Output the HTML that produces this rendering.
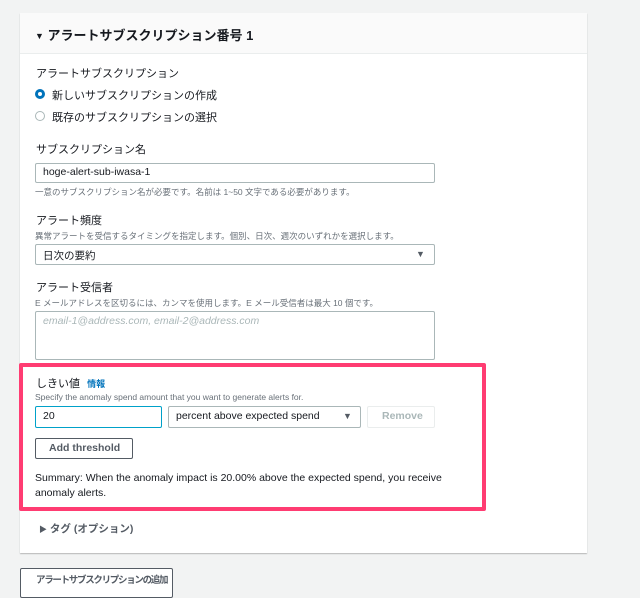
<!DOCTYPE html>
<html><head><meta charset="utf-8"><style>
*{box-sizing:border-box;margin:0;padding:0}
body{width:640px;height:588px;background:#f2f3f3;font-family:"Liberation Sans","Noto Sans CJK JP",sans-serif;color:#16191f;position:relative;overflow:hidden}
.a{position:absolute;white-space:nowrap}
.card{position:absolute;left:20px;top:13px;width:567px;height:540px;background:#fff;box-shadow:0 1px 1px rgba(0,0,0,.25)}
.hdr{position:absolute;left:20px;top:13px;width:567px;height:41px;background:#fafafa;border-bottom:1px solid #eaeded}
.lbl{font-size:11px;color:#16191f}
.hint{font-size:8.5px;color:#687078}
.box{position:absolute;border:1px solid #aab7b8;border-radius:2px;background:#fff}
.tri{font-size:9px;color:#545b64}
</style></head><body>
<div class="card"></div>
<div class="hdr"></div>
<div class="a" style="left:35px;top:25px;font-size:13px;font-weight:bold"><span style="font-size:9px;position:relative;top:-1px">▼</span> アラートサブスクリプション番号 1</div>
<div class="a lbl" style="left:36px;top:65px">アラートサブスクリプション</div>
<div class="a" style="left:35px;top:89px;width:10px;height:10px;border-radius:50%;border:3px solid #0073bb"></div>
<div class="a lbl" style="left:52px;top:87px">新しいサブスクリプションの作成</div>
<div class="a" style="left:35px;top:111px;width:10px;height:10px;border-radius:50%;border:1px solid #aab7b8"></div>
<div class="a lbl" style="left:52px;top:109px">既存のサブスクリプションの選択</div>
<div class="a lbl" style="left:36px;top:141px">サブスクリプション名</div>
<div class="box" style="left:35px;top:163px;width:400px;height:20px"></div>
<div class="a" style="left:43px;top:166px;font-size:10.5px">hoge-alert-sub-iwasa-1</div>
<div class="a hint" style="left:35px;top:186px">一意のサブスクリプション名が必要です。名前は 1~50 文字である必要があります。</div>
<div class="a lbl" style="left:36px;top:212px">アラート頻度</div>
<div class="a hint" style="left:35px;top:230px">異常アラートを受信するタイミングを指定します。個別、日次、週次のいずれかを選択します。</div>
<div class="box" style="left:35px;top:244px;width:400px;height:21px"></div>
<div class="a" style="left:43px;top:248px;font-size:10.5px">日次の要約</div>
<div class="a tri" style="left:416px;top:249px">▼</div>
<div class="a lbl" style="left:36px;top:279px">アラート受信者</div>
<div class="a hint" style="left:35px;top:297px">E メールアドレスを区切るには、カンマを使用します。E メール受信者は最大 10 個です。</div>
<div class="box" style="left:35px;top:311px;width:400px;height:49px"></div>
<div class="a" style="left:43px;top:315px;font-size:10.5px;font-style:italic;color:#aab7b8">email-1@address.com, email-2@address.com</div>
<div class="a" style="left:19px;top:363px;width:467px;height:148px;border:4px solid #ff3c72;border-radius:2px"></div>
<div class="a lbl" style="left:36px;top:375px">しきい値 <span style="color:#0073bb;font-size:9px;font-weight:bold;margin-left:4px">情報</span></div>
<div class="a hint" style="left:35px;top:392px">Specify the anomaly spend amount that you want to generate alerts for.</div>
<div class="box" style="left:35px;top:406px;width:127px;height:22px;border-color:#00a1c9"></div>
<div class="a" style="left:43px;top:410px;font-size:10.5px">20</div>
<div class="box" style="left:168px;top:406px;width:193px;height:22px"></div>
<div class="a" style="left:176px;top:410px;font-size:10.5px">percent above expected spend</div>
<div class="a tri" style="left:343px;top:411px">▼</div>
<div class="box" style="left:367px;top:406px;width:68px;height:22px;border-color:#eaeded"></div>
<div class="a" style="left:382px;top:410px;font-size:10.5px;font-weight:bold;color:#aab7b8">Remove</div>
<div class="box" style="left:35px;top:438px;width:98px;height:21px;border-color:#545b64"></div>
<div class="a" style="left:49px;top:442px;font-size:10.5px;font-weight:bold;color:#545b64">Add threshold</div>
<div class="a" style="left:35px;top:471px;font-size:10.5px;line-height:15px">Summary: When the anomaly impact is 20.00% above the expected spend, you receive<br>anomaly alerts.</div>
<div class="a" style="left:39px;top:521px;font-size:10.5px;font-weight:bold;color:#545b64"><span style="font-size:8px">▶</span> タグ (オプション)</div>
<div class="box" style="left:20px;top:568px;width:153px;height:30px;border-color:#545b64"></div>
<div class="a" style="left:36px;top:572px;font-size:9.5px;letter-spacing:-1.3px;font-weight:bold;color:#545b64">アラートサブスクリプションの追加</div>
</body></html>
